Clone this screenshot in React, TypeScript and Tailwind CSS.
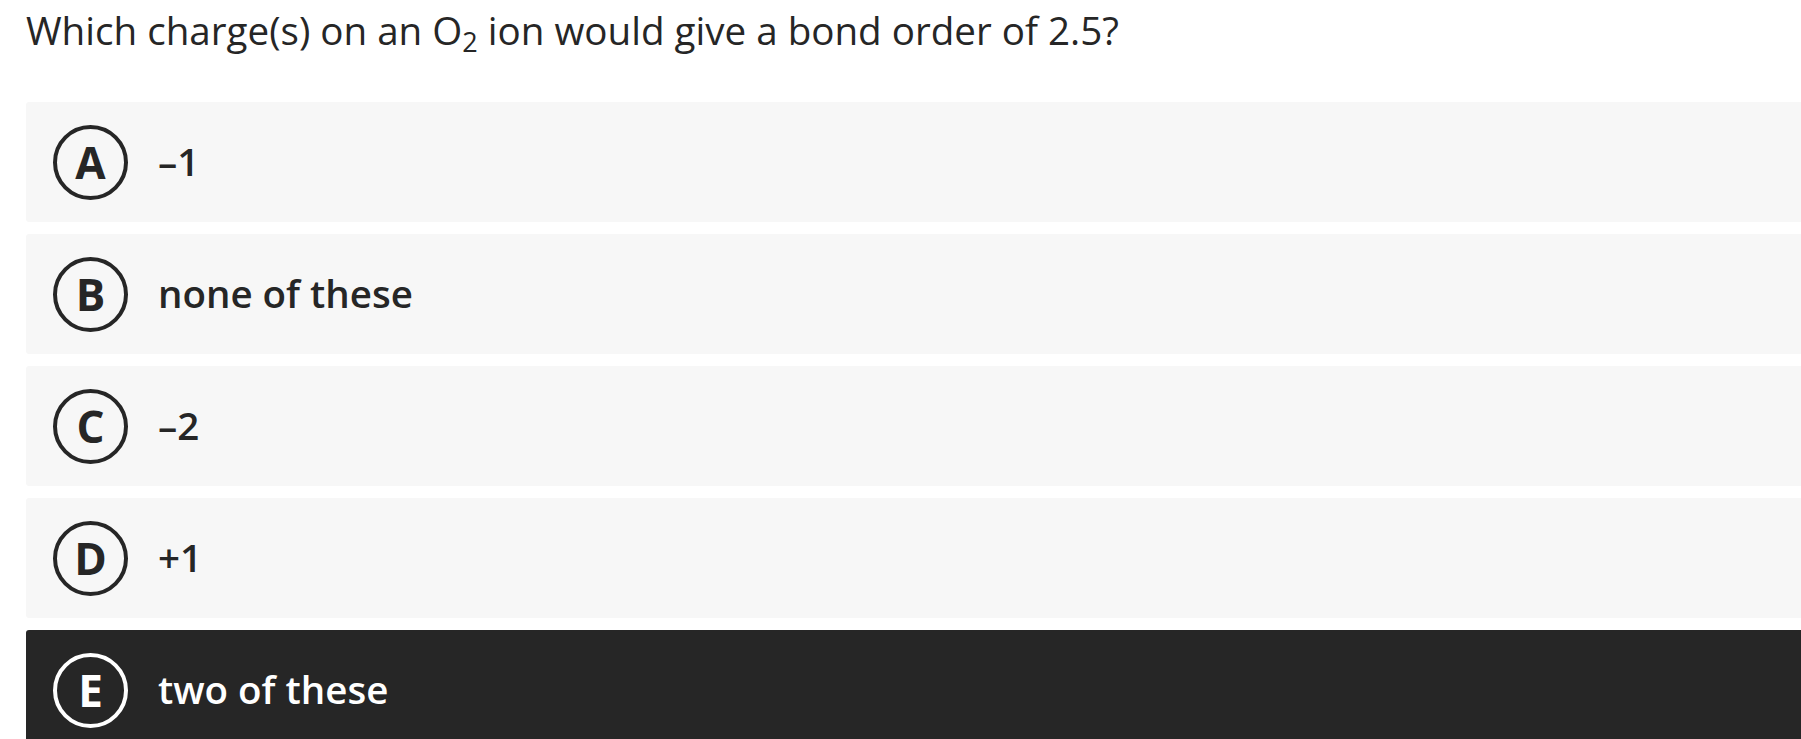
import React from "react";

type Choice = { letter: string; text: string; selected?: boolean };

const choices: Choice[] = [
  { letter: "A", text: "\u20131" },
  { letter: "B", text: "none of these" },
  { letter: "C", text: "\u20132" },
  { letter: "D", text: "+1" },
  { letter: "E", text: "two of these", selected: true },
];

function ChoiceRow({ letter, text, selected }: Choice) {
  return (
    <div
      className={`flex h-[120px] shrink-0 items-center rounded-l-[3px] pl-[27px] ${
        selected ? "bg-[#262626] text-white" : "bg-[#f7f7f7] text-[#262626]"
      }`}
    >
      <div
        className={`flex h-[75px] w-[75px] shrink-0 items-center justify-center rounded-full border-[4px] text-[44px] font-bold ${
          selected ? "border-white" : "border-[#262626]"
        }`}
      >
        {letter}
      </div>
      <span className="ml-[30px] text-[38.5px] font-[550]">{text}</span>
    </div>
  );
}

export default function App() {
  return (
    <div
      className="h-[739px] w-[1801px] overflow-hidden bg-white pl-[26px]"
      style={{ fontFamily: '"Open Sans", "Liberation Sans", sans-serif' }}
    >
      <h1 className="pt-[2px] text-[38.6px] font-[370] leading-[56px] text-[#262626]">
        Which charge(s) on an O<sub className="text-[27px]">2</sub> ion would give a bond order of 2.5?
      </h1>
      <div className="mt-[44px] flex flex-col gap-[12px]">
        {choices.map((c) => (
          <ChoiceRow key={c.letter} {...c} />
        ))}
      </div>
    </div>
  );
}
